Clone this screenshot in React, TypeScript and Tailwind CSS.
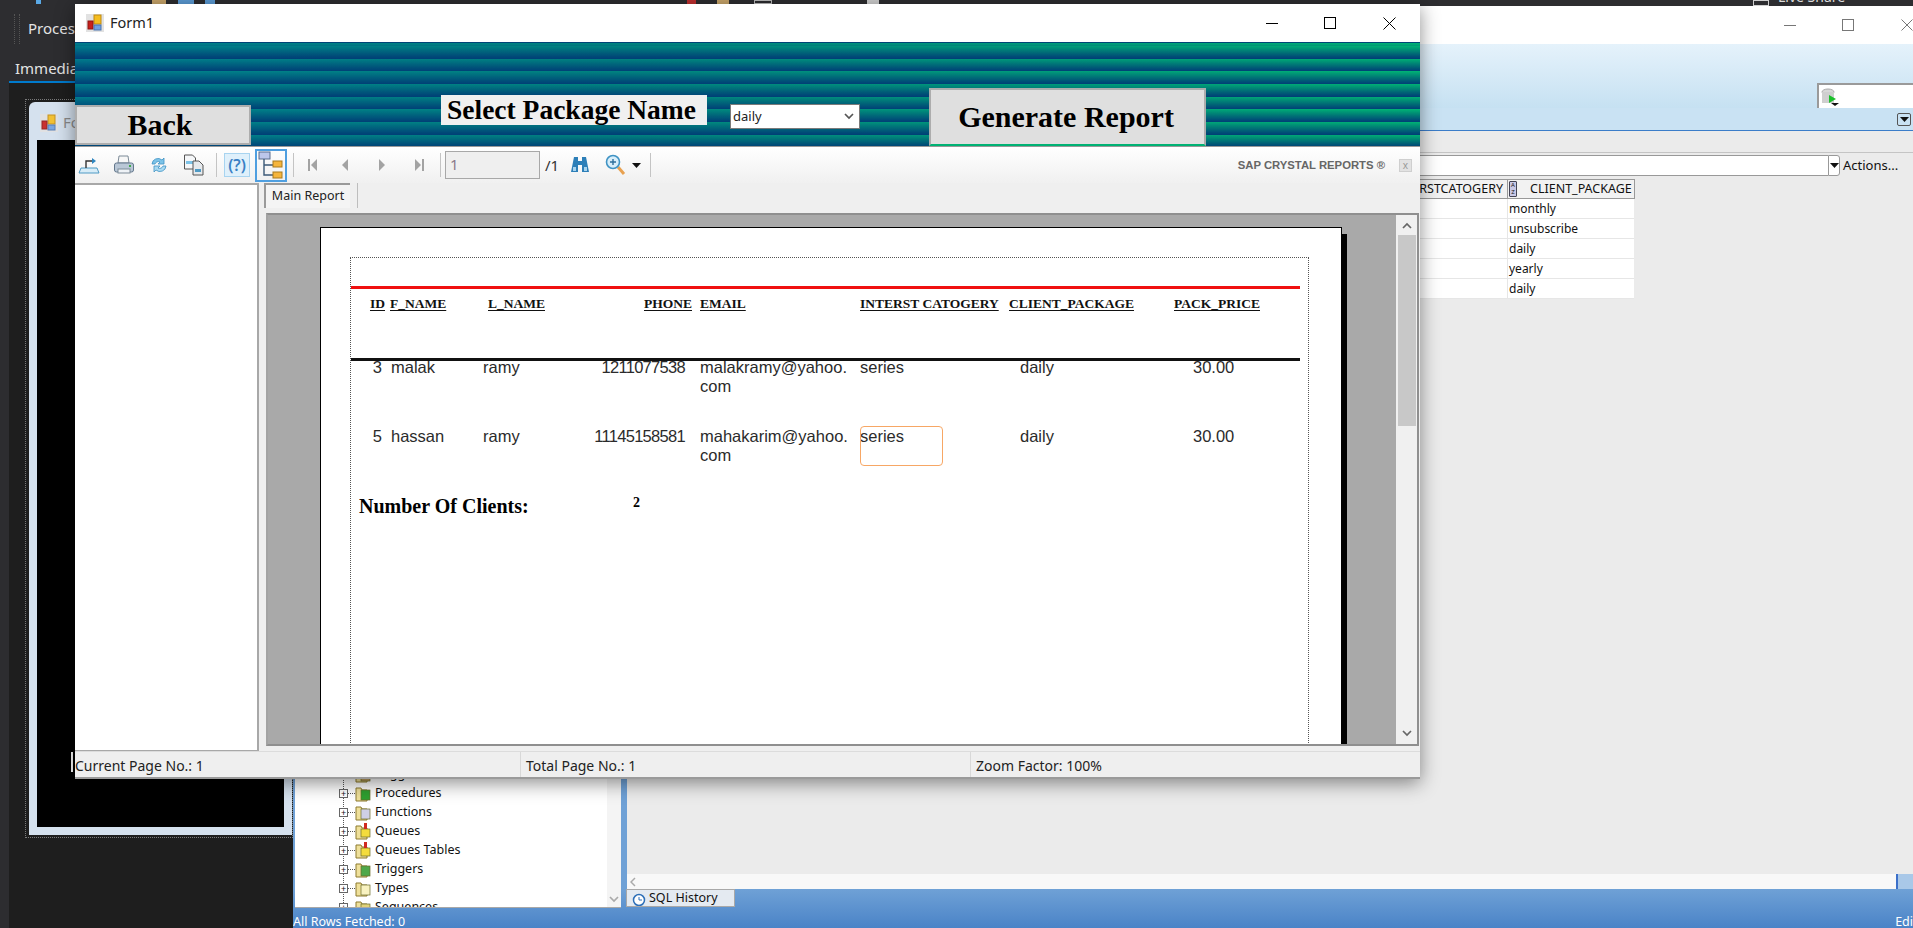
const serif = "[font-family:'Liberation_Serif',serif]";
const cols = "grid grid-cols-[36px_96px_97px_120px_160px_149px_161px_130px]";

function FormIcon({ dim }: { dim?: boolean }) {
  return (
    <svg width="18" height="18" viewBox="0 0 18 18" className={dim ? "opacity-90" : ""}>
      <rect width="18" height="18" fill="#e2e2e2" />
      <rect x="8" y="1" width="7" height="9" fill="#f5bd1f" stroke="#c08a10" />
      <rect x="2" y="7" width="5" height="8" fill="#c8201c" stroke="#8e1410" />
      <rect x="8" y="11" width="7" height="5" fill="#6f9fe0" stroke="#4a74b0" />
    </svg>
  );
}

function ExportIcon() {
  return (
    <svg width="22" height="20" viewBox="0 0 22 20" fill="none">
      <path d="M1 18l2-5h16l2 5z" fill="#d7ecf7" stroke="#4f9ac4" />
      <path d="M8 13V6h6" stroke="#333" strokeWidth="1.4" />
      <path d="M14 3l4 3-4 3z" fill="#2f86c0" />
    </svg>
  );
}

function PrintIcon() {
  return (
    <svg width="22" height="20" viewBox="0 0 22 20" fill="none">
      <path d="M6 1h9l1 7H5z" fill="#f7f7f7" stroke="#7d8b98" />
      <rect x="1.5" y="8" width="19" height="9" rx="2" fill="#b9c7d6" stroke="#63778c" />
      <rect x="5" y="14" width="12" height="4" fill="#eef2f6" stroke="#7d8b98" />
      <rect x="16" y="10" width="2" height="2" fill="#3eaa4b" />
    </svg>
  );
}

function RefreshIcon() {
  return (
    <svg width="18" height="18" viewBox="0 0 18 18" fill="none">
      <path d="M2 8a6 6 0 0 1 10-4l2-2v6H8l2-2a3.5 3.5 0 0 0-5 2z" fill="#7cc3e8" stroke="#3f93c4" strokeWidth=".8" />
      <path d="M16 10a6 6 0 0 1-10 4l-2 2v-6h6l-2 2a3.5 3.5 0 0 0 5-2z" fill="#a9daf2" stroke="#3f93c4" strokeWidth=".8" />
    </svg>
  );
}

function PagesIcon() {
  return (
    <svg width="22" height="22" viewBox="0 0 22 22" fill="none">
      <path d="M1.5 1h8l3 3v11h-11z" fill="#f5f7f9" stroke="#555" />
      <rect x="3" y="7" width="7" height="3" fill="#7cc3e8" />
      <path d="M10 7h6l4 4v10H10z" fill="#e6e9ec" stroke="#555" />
      <rect x="12" y="15" width="6" height="3" fill="#4f9ac4" />
    </svg>
  );
}

function TreeToggleIcon() {
  return (
    <svg width="26" height="28" viewBox="0 0 26 28" fill="none">
      <rect x="1" y="1" width="11" height="7" fill="#bcc6ea" stroke="#5a6c8c" />
      <path d="M6 8v16h9M6 14h9" stroke="#3c5a78" strokeWidth="1.4" />
      <rect x="15" y="10" width="9" height="6" fill="#f5b53c" stroke="#a87a1e" />
      <rect x="15" y="21" width="9" height="6" fill="#f5b53c" stroke="#a87a1e" />
    </svg>
  );
}

function NavIcon({ dir, bar }: { dir: "l" | "r"; bar?: boolean }) {
  return (
    <svg width="10" height="14" viewBox="0 0 10 14" fill="#a3a3a3">
      {dir === "l" ? <path d="M9 1L3 7l6 6z" /> : <path d="M1 1l6 6-6 6z" />}
      {bar && (dir === "l" ? <rect x="0" y="1" width="2" height="12" /> : <rect x="8" y="1" width="2" height="12" />)}
    </svg>
  );
}

function BinocularsIcon() {
  return (
    <svg width="20" height="18" viewBox="0 0 20 18" fill="#2d7fb8">
      <path d="M4 1h4v4h4V1h4l3 15h-7V9H8v7H1z" />
      <rect x="3" y="11" width="3" height="4" fill="#a9d4ee" />
      <rect x="14" y="11" width="3" height="4" fill="#a9d4ee" />
    </svg>
  );
}

function ZoomIcon() {
  return (
    <svg width="21" height="22" viewBox="0 0 21 22" fill="none">
      <path d="M13 13l6 7" stroke="#e8a150" strokeWidth="3" />
      <circle cx="8" cy="8" r="6.5" fill="#d8eefa" stroke="#3f93c4" strokeWidth="1.6" />
      <path d="M5 8h6M8 5v6" stroke="#2d6f9c" strokeWidth="1.4" />
    </svg>
  );
}

function Caret({ className }: { className?: string }) {
  return (
    <svg width="9" height="5" viewBox="0 0 9 5" className={className}>
      <path d="M0 0h9L4.500 5z" fill="#111" />
    </svg>
  );
}

function Chev({ up, color = "#666" }: { up?: boolean; color?: string }) {
  return (
    <svg width="10" height="7" viewBox="0 0 10 7" fill="none">
      <path d={up ? "M1 6l4-4 4 4" : "M1 1l4 4 4-4"} stroke={color} strokeWidth="1.7" />
    </svg>
  );
}

function ToolSep() {
  return <div className="w-px h-[24px] bg-[#c4c4c4]" />;
}

function FolderIcon({ color, kind }: { color: string; kind?: string }) {
  return (
    <svg width="16" height="17" viewBox="0 0 16 17" fill="none">
      <path d="M1 3h5l1 2h5v11H1z" fill="#efe09a" stroke="#8d7a2e" />
      <rect x="6" y={kind === "queue" ? 6 : 5} width="9" height={kind === "queue" ? 8 : 10} fill={color} stroke="#6b6b2a" strokeWidth=".7" />
      {kind === "queue" && <rect x="9" y="0" width="3" height="6" fill="#d02a20" />}
    </svg>
  );
}

const treeRows: { name: string; color: string; kind?: string }[] = [
  { name: "Triggers", color: "#c0a060" },
  { name: "Procedures", color: "#2fa030" },
  { name: "Functions", color: "#cfcfe6" },
  { name: "Queues", color: "#f4dc3c", kind: "queue" },
  { name: "Queues Tables", color: "#f4dc3c", kind: "queue" },
  { name: "Triggers", color: "#4fa84a" },
  { name: "Types", color: "#f8f2c0" },
  { name: "Sequences", color: "#e0d27a" },
];

function ReportRow({ id, first, phone, email, focus }: { id: string; first: string; phone: string; email: string; focus?: boolean }) {
  return (
    <div className={`${cols} h-[69px] [font-family:'Liberation_Sans',sans-serif] text-[16.500px] leading-[19px] text-[#2b2b2b]`}>
      <div className="text-right pr-[5px]">{id}</div>
      <div className="pl-[4px]">{first}</div>
      <div>ramy</div>
      <div className="text-right pr-[15px] tracking-[-0.7px]">{phone}</div>
      <div>
        {email}@yahoo.
        <br />
        com
      </div>
      <div className="relative">
        series
        {focus && <div className="absolute -top-px left-0 w-[83px] h-[40px] rounded-[4px] border border-[#f7a765]" />}
      </div>
      <div className="pl-[11px]">daily</div>
      <div className="pl-[23px]">30.00</div>
    </div>
  );
}

function FormWindow() {
  return (
    <div className="absolute left-[75px] top-[4px] w-[1345px] h-[775px] flex flex-col bg-[#efefef] shadow-[0_4px_18px_rgba(0,0,0,0.45)] [font-family:'Noto_Sans',sans-serif]">
      <div className="h-[38px] bg-white flex items-center pl-[11px] shrink-0">
        <FormIcon />
        <span className="ml-[6px] text-[14.500px] text-[#222]">Form1</span>
        <div className="ml-auto flex items-center">
          <div className="w-[12px] h-px bg-black mr-[46px]" />
          <div className="w-[12px] h-[12px] border border-black mr-[47px]" />
          <svg width="13" height="13" viewBox="0 0 13 13" className="mr-[24px]">
            <path d="M0.500 0.500l12 12M12.500 0.500l-12 12" stroke="#000" />
          </svg>
        </div>
      </div>

      <div className="h-[104px] shrink-0 flex items-start bg-[repeating-linear-gradient(to_bottom,rgba(0,64,118,0)_0px,rgba(0,64,118,0.9)_11px,rgba(0,64,118,1)_12.670px),linear-gradient(to_right,#007d8c,#00837f_40%,#00b274)] bg-[position:0_4px]">
        <button className={`${serif} mt-[63px] w-[176px] h-[40px] bg-[#dfdfdf] border-2 border-[#adadad] pr-[6px] font-bold text-[30px] leading-none text-black`}>
          Back
        </button>
        <div className={`${serif} ml-[190px] mt-[53px] w-[266px] h-[30px] bg-[#f0f0f0] pl-[6px] font-bold text-[27.500px] leading-[30px] text-black whitespace-nowrap`}>
          Select Package Name
        </div>
        <div className="ml-[23px] mt-[62px] w-[130px] h-[25px] bg-white border border-[#7a7a7a] flex items-center pl-[2px] pr-[5px] text-[13px] text-[#222]">
          <span>daily</span>
          <div className="ml-auto">
            <Chev color="#555" />
          </div>
        </div>
        <button className={`${serif} ml-[69px] mt-[46px] w-[277px] h-[58px] bg-[#dfdfdf] border-2 border-[#adadad] border-b-[#00b274] pr-[3px] font-bold text-[30px] leading-none text-black`}>
          Generate Report
        </button>
      </div>

      <div className="h-[37px] shrink-0 flex items-center bg-[linear-gradient(to_bottom,#ffffff,#f0f0f0)] border-t border-[#999]">
        <div className="ml-[3px]"><ExportIcon /></div>
        <div className="ml-[13px]"><PrintIcon /></div>
        <div className="ml-[15px]"><RefreshIcon /></div>
        <div className="ml-[15px]"><PagesIcon /></div>
        <div className="ml-[11px]"><ToolSep /></div>
        <div className="ml-[7px] w-[26px] h-[24px] bg-[#dff0fb] border border-[#a8d4f0] flex items-center justify-center text-[16px] font-semibold text-[#3a80c4]">(?)</div>
        <div className="ml-[5px] w-[32px] h-[33px] border-2 border-[#4f9fe0] flex items-center justify-center"><TreeToggleIcon /></div>
        <div className="ml-[6px]"><ToolSep /></div>
        <div className="ml-[14px]"><NavIcon dir="l" bar /></div>
        <div className="ml-[21px]"><NavIcon dir="l" /></div>
        <div className="ml-[29px]"><NavIcon dir="r" /></div>
        <div className="ml-[26px]"><NavIcon dir="r" bar /></div>
        <div className="ml-[16px]"><ToolSep /></div>
        <div className="ml-[4px] w-[95px] h-[28px] bg-[#efefef] border border-[#a8a8a8] pl-[4px] text-[15px] leading-[24px] text-[#8a7a8a]">1</div>
        <span className="ml-[5px] text-[15px] text-[#333]">/1</span>
        <div className="ml-[11px]"><BinocularsIcon /></div>
        <div className="ml-[15px]"><ZoomIcon /></div>
        <Caret className="ml-[6px]" />
        <div className="ml-[9px]"><ToolSep /></div>
        <span className="ml-auto text-[11.300px] font-bold text-[#666] [font-family:'Liberation_Sans',sans-serif]">SAP CRYSTAL REPORTS ®</span>
        <div className="ml-[14px] mr-[8px] w-[13px] h-[13px] bg-[#e2e2e2] border border-[#cfcfcf] text-[10px] leading-[11px] text-center text-[#999]">x</div>
      </div>

      <div className="flex-1 flex min-h-0">
        <div className="w-[184px] h-[569px] bg-white border-2 border-l-0 border-[#a8a8a8] shrink-0" />
        <div className="flex-1 flex flex-col min-w-0 ml-[7px]">
          <div className="h-[30px] shrink-0 flex items-start -ml-[2px]">
            <div className="w-[86px] h-[25px] bg-[#f4f4f4] border-2 border-b-0 border-r-0 border-[#9a9a9a] flex items-center justify-center text-[12.500px] text-[#222]">Main Report</div>
            <div className="ml-[7px] w-px h-[25px] bg-[#bdbdbd]" />
          </div>
          <div className="h-[533px] mr-[1px] flex border-2 border-[#8f8f8f] border-l-[#a3a3a3]">
            <div className="flex-1 min-w-0 bg-[#a9a9a9] pl-[52px] pt-[12px] overflow-hidden">
              <div className="w-[1022px] h-[600px] bg-white border-l border-t border-r border-black shadow-[5px_7px_0_#000] pl-[29px] pt-[29px]">
                <div className="w-[959px] h-[600px] border border-dotted border-[#555]">
                  <div className="w-[949px]">
                    <div className="h-[3px] mt-[28px] bg-[#f01010]" />
                    <div className={`${cols} ${serif} h-[69px] text-[13.500px] font-bold underline underline-offset-2 pt-[7px] text-[#111] leading-[16px] whitespace-nowrap`}>
                      <div className="text-right pr-[2px]">ID</div>
                      <div className="pl-[3px]">F_NAME</div>
                      <div className="pl-[5px]">L_NAME</div>
                      <div className="text-right pr-[8px]">PHONE</div>
                      <div>EMAIL</div>
                      <div>INTERST CATOGERY</div>
                      <div>CLIENT_PACKAGE</div>
                      <div className="pl-[4px]">PACK_PRICE</div>
                    </div>
                    <div className="h-[3px] bg-[#111]" />
                    <div className="-mt-[3px]">
                      <ReportRow id="3" first="malak" phone="1211077538" email="malakramy" />
                      <ReportRow id="5" first="hassan" phone="11145158581" email="mahakarim" focus />
                    </div>
                    <div className={`${serif} flex font-bold text-black`}>
                      <span className="ml-[8px] w-[274px] text-[20px] leading-[20px]">Number Of Clients:</span>
                      <span className="text-[14px] leading-[14px]">2</span>
                    </div>
                  </div>
                </div>
              </div>
            </div>
            <div className="w-[21px] shrink-0 bg-[#f0f0f0] flex flex-col items-center py-[7px]">
              <Chev up />
              <div className="mt-[6px] w-[18px] h-[191px] bg-[#c8c8c8]" />
              <div className="mt-auto"><Chev /></div>
            </div>
          </div>
        </div>
      </div>

      <div className="h-[28px] shrink-0 flex items-center text-[14px] text-[#222] border-t border-b-2 border-[#dcdcdc] border-b-[#9a9a9a] bg-[#efefef]">
        <div className="w-[446px] h-full flex items-center pt-[2px] border-r border-[#d8d8d8]">Current Page No.: 1</div>
        <div className="w-[450px] h-full flex items-center pt-[2px] pl-[5px] border-r border-[#d8d8d8]">Total Page No.: 1</div>
        <div className="pl-[5px] pt-[2px]">Zoom Factor: 100%</div>
      </div>
    </div>
  );
}

export default function App() {
  return (
    <div className="relative w-[1913px] h-[928px] overflow-hidden flex flex-col bg-[#1e1e1e] [font-family:'Noto_Sans',sans-serif]">
      <div className="h-[6px] shrink-0 bg-[#2d2d30] flex items-start">
        <div className="ml-[36px] w-[5px] h-[4px] bg-[#5aa9e6]" />
        <div className="ml-[111px] w-[14px] h-[4px] bg-[#c9a66b]" />
        <div className="ml-[12px] w-[16px] h-[4px] bg-[#5b9bd5]" />
        <div className="ml-[11px] w-[10px] h-[4px] bg-[#5b9bd5]" />
        <div className="ml-[472px] w-[9px] h-[5px] bg-[#c03030]" />
        <div className="ml-[21px] w-[12px] h-[4px] bg-[#c9a66b]" />
        <div className="ml-[25px] w-[18px] h-[4px] border border-[#bbb]" />
        <div className="ml-[95px] w-[12px] h-[4px] bg-[#cfcfcf]" />
        <div className="ml-[874px] w-[16px] h-[6px] border border-[#cfcfcf]" />
        <div className="ml-[9px] -mt-[13px] text-[14px] leading-[20px] text-[#ddd] whitespace-nowrap">Live Share</div>
      </div>

      <div className="flex-1 flex min-h-0">
        <div className="w-[293px] shrink-0 flex flex-col">
          <div className="h-[45px] shrink-0 bg-[#2d2d30] flex items-center">
            <div className="ml-[14px] w-[6px] h-[30px] border-x border-dotted border-[#555]" />
            <span className="ml-[8px] text-[15px] text-[#e4e4e4]">Process</span>
          </div>
          <div className="h-[32px] shrink-0 bg-[#2d2d30] pl-[9px]">
            <div className="h-[32px] border-b-2 border-[#007acc] bg-[#2d2d30] pl-[6px] text-[15px] leading-[34px] text-[#e4e4e4]">Immediate</div>
          </div>
          <div className="flex-1 flex min-h-0">
            <div className="w-[9px] bg-[#2d2d30] shrink-0" />
            <div className="flex-1 pl-[16px] pt-[16px]">
              <div className="h-[739px] border border-dotted border-[#7a7a7a] pl-[3px] pt-[2px]">
                <div className="h-[733px] rounded-t-[6px] bg-[#d5e1ee] flex flex-col px-[8px] pb-[8px]">
                  <div className="h-[38px] shrink-0 flex items-center pl-[3px] pt-[3px]">
                    <FormIcon dim />
                    <span className="ml-[5px] text-[15px] text-[#8a8a8a]">Form1</span>
                  </div>
                  <div className="relative flex-1 bg-black">
                    <div className="absolute left-[34px] top-[612px] w-[2px] h-[20px] bg-white" />
                  </div>
                </div>
              </div>
            </div>
          </div>
        </div>

        <div className="flex-1 min-w-0 flex flex-col bg-white">
          <div className="h-[38px] shrink-0 flex items-center bg-white">
            <div className="ml-auto w-[12px] h-px bg-[#777] mr-[46px]" />
            <div className="w-[12px] h-[12px] border border-[#777] mr-[47px]" />
            <svg width="12" height="12" viewBox="0 0 12 12"><path d="M0.500 0.500l11 11M11.500 0.500l-11 11" stroke="#777" /></svg>
          </div>
          <div className="h-[64px] shrink-0 flex items-end justify-end bg-[linear-gradient(to_bottom,#e5f2fb,#c6e1f2)]">
            <div className="w-[96px] h-[25px] bg-white border-2 border-b-0 border-r-0 border-[#9a9a9a] pl-[2px] pt-[3px]">
              <svg width="18" height="18" viewBox="0 0 18 18">
                <ellipse cx="7" cy="4" rx="6" ry="3" fill="#d8d8d8" stroke="#aaa" />
                <rect x="1" y="4" width="12" height="11" fill="#cfcfcf" />
                <path d="M8 7l7 4-7 4z" fill="#19c02a" />
                <path d="M10 15h8l-4 3z" fill="#111" />
              </svg>
            </div>
          </div>
          <div className="h-[23px] shrink-0 flex items-center justify-end pr-[2px] bg-[#c9e2f3] border-b border-[#3b7dc9]">
            <div className="w-[14px] h-[13px] rounded-[2px] border border-[#555] flex items-center justify-center"><Caret /></div>
          </div>

          <div className="flex-1 min-h-0 flex flex-col bg-[linear-gradient(to_bottom,#6fa1d6_0,#6fa1d6_758px,#4a83c7_100%)]">
            <div className="flex-1 min-h-0 flex">
              <div className="w-[312px] shrink-0 ml-[2px] flex flex-col justify-end overflow-hidden bg-white border-b border-[#a8a8a8]">
                <div className="flex -mb-[10px]">
                  <div className="flex-1 ml-[48px] border-l border-dotted border-[#555]">
                    {treeRows.map((r, i) => (
                      <div key={i} className="h-[19px] flex items-center -ml-[5px] text-[12.500px] text-[#111]">
                        <div className="w-[9px] h-[9px] bg-white border border-[#666] flex items-center justify-center text-[9px] leading-[7px] shrink-0">+</div>
                        <div className="w-[7px] border-t border-dotted border-[#555] shrink-0" />
                        <FolderIcon color={r.color} kind={r.kind} />
                        <span className="ml-[4px]">{r.name}</span>
                      </div>
                    ))}
                  </div>
                </div>
              </div>
              <div className="w-[14px] shrink-0 bg-[#f4f4f4] border-b border-[#a8a8a8] flex items-end justify-center pb-[4px]"><Chev color="#aaa" /></div>
              <div className="flex-1 min-w-0 ml-[6px] flex flex-col">
                <div className="flex-1 min-h-0 bg-[#ebebeb] pt-[21px] flex flex-col">
                  <div className="h-[3px] border-t border-[#c4c4c4] shrink-0" />
                  <div className="h-[21px] shrink-0 flex items-center text-[13px] text-[#111]">
                    <div className="w-[1201px] h-full bg-white border border-[#999] border-r-0" />
                    <div className="w-[12px] h-full bg-white border border-[#999] rounded-r-[3px] flex items-center justify-center"><Caret /></div>
                    <span className="ml-[3px]">Actions...</span>
                  </div>
                  <div className="h-[20px] mt-[3px] shrink-0 flex text-[12.500px] text-[#111]">
                    <div className="w-[880px] text-right pr-[4px] bg-[#f2f2f2] border-y border-[#999] leading-[18px]">INTERSTCATOGERY</div>
                    <div className="w-[128px] flex items-center bg-[#f2f2f2] border border-[#999]">
                      <div className="ml-[1px] w-[8px] h-[16px] rounded-[1px] bg-[#c9c9e6] border border-[#445] text-[6px] leading-[7px] text-center overflow-hidden">A<br />Z</div>
                      <span className="ml-[13px]">CLIENT_PACKAGE</span>
                    </div>
                  </div>
                  {["monthly", "unsubscribe", "daily", "yearly", "daily"].map((v, i) => (
                    <div key={i} className="h-[20px] shrink-0 flex text-[12px] text-[#111]">
                      <div className="w-[880px] bg-white border-b border-[#e6e6e6]" />
                      <div className="w-[127px] bg-white border-b border-l border-[#e6e6e6] pl-[1px] leading-[19px]">{v}</div>
                    </div>
                  ))}
                </div>
                <div className="h-[15px] shrink-0 bg-[#f8f8f8] flex items-center pl-[3px]">
                  <svg width="6" height="10" viewBox="0 0 6 10"><path d="M5 1L1 5l4 4" stroke="#aaa" strokeWidth="1.500" fill="none" /></svg>
                  <div className="ml-auto w-[17px] h-full bg-[#a9c8e8] border-l-2 border-[#3b6fc9]" />
                </div>
                <div className="h-[19px] shrink-0 flex -ml-px">
                  <div className="w-[109px] h-[18px] bg-[#e4eaf1] border border-[#a8a8a8] flex items-center pl-[5px] pt-[1px] text-[12.500px] text-[#111]">
                    <svg width="14" height="14" viewBox="0 0 14 14"><circle cx="7" cy="8" r="5.500" fill="#fff" stroke="#2d6fb8" strokeWidth="1.500" /><path d="M7 5v3h3" stroke="#2d6fb8" fill="none" /></svg>
                    <span className="ml-[3px]">SQL History</span>
                  </div>
                </div>
              </div>
            </div>
            <div className="h-[20px] shrink-0 flex items-start pt-[7px] text-[12.500px] leading-[14px] text-white overflow-hidden">
              <span>All Rows Fetched: 0</span>
              <span className="ml-auto">Edi</span>
            </div>
          </div>
        </div>
      </div>

      <FormWindow />
    </div>
  );
}
